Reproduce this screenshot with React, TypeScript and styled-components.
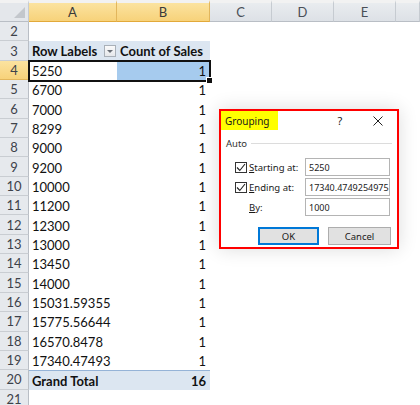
import React from "react";
import styled, { createGlobalStyle, css } from "styled-components";

const GlobalStyle = createGlobalStyle`
  html, body {
    margin: 0;
    padding: 0;
    background: #ffffff;
    overflow: hidden;
  }
  body {
    font-family: Lato, "Liberation Sans", sans-serif;
  }
`;

const ROWS: { label: string; count: string }[] = [
  { label: "6700", count: "1" },
  { label: "7000", count: "1" },
  { label: "8299", count: "1" },
  { label: "9000", count: "1" },
  { label: "9200", count: "1" },
  { label: "10000", count: "1" },
  { label: "11200", count: "1" },
  { label: "12300", count: "1" },
  { label: "13000", count: "1" },
  { label: "13450", count: "1" },
  { label: "14000", count: "1" },
  { label: "15031.59355", count: "1" },
  { label: "15775.56644", count: "1" },
  { label: "16570.8478", count: "1" },
  { label: "17340.47493", count: "1" },
];

const COLUMNS = ["A", "B", "C", "D", "E", ""];

const Page = styled.div`
  position: relative;
  width: 420px;
  height: 405px;
  overflow: hidden;
`;

const Sheet = styled.div`
  position: relative;
  display: grid;
  grid-template-columns: 29px 88px 93px 62px 62px 62px 1fr;
  grid-template-rows: 22px repeat(20, 19.35px);
`;

const Corner = styled.div`
  position: relative;
  background: #e4e7eb;
  border-top: 3px solid #f2f2f2;
  border-right: 1px solid #c6cbd1;
  border-bottom: 1px solid #b9bec5;
  box-sizing: border-box;
  &::after {
    content: "";
    position: absolute;
    right: 3px;
    bottom: 3px;
    width: 0;
    height: 0;
    border-left: 11px solid transparent;
    border-bottom: 11px solid #c3c7cc;
  }
`;

const ColHeader = styled.div<{ $selected?: boolean }>`
  display: flex;
  align-items: center;
  justify-content: center;
  box-sizing: border-box;
  border-top: 3px solid #f2f2f2;
  border-right: 1px solid #c6cbd1;
  border-bottom: 1px solid #b9bec5;
  font-size: 13px;
  color: #4a4f57;
  background: linear-gradient(#e9ecef, #dde1e6);
  ${(p) =>
    p.$selected &&
    css`
      background: linear-gradient(#fbe3a0, #f7d27a);
      border-right-color: #e2b65c;
      border-bottom-color: #e2a93a;
      color: #3a3a3a;
    `}
`;

const RowHeader = styled.div<{ $selected?: boolean }>`
  display: flex;
  align-items: center;
  justify-content: center;
  box-sizing: border-box;
  border-right: 1px solid #b9bec5;
  border-bottom: 1px solid #c9cdd2;
  background: #e6e9ed;
  font-size: 13px;
  color: #3d424a;
  ${(p) =>
    p.$selected &&
    css`
      background: linear-gradient(#fbe3a0, #f7d27a);
      border-right-color: #e2a93a;
      border-bottom-color: #e2b65c;
    `}
`;

type CellKind = "plain" | "head" | "total" | "highlight";

const Cell = styled.div<{ $kind?: CellKind; $right?: boolean }>`
  display: flex;
  align-items: center;
  justify-content: ${(p) => (p.$right ? "flex-end" : "flex-start")};
  box-sizing: border-box;
  padding: 1px 4px 0 3px;
  font-size: 13px;
  color: #111;
  white-space: nowrap;
  overflow: hidden;
  background: #ffffff;
  ${(p) =>
    p.$kind === "head" &&
    css`
      background: #dce6f1;
      font-weight: 700;
      border-bottom: 1px solid #c5d5e8;
    `}
  ${(p) =>
    p.$kind === "total" &&
    css`
      background: #dce6f1;
      font-weight: 700;
      border-top: 1px solid #95b3d7;
    `}
  ${(p) =>
    p.$kind === "highlight" &&
    css`
      background: #a6cbee;
    `}
`;

const HeadCell = styled(Cell)`
  justify-content: space-between;
  padding-right: 1px;
`;

const FilterButton = styled.span`
  display: inline-flex;
  align-items: center;
  justify-content: center;
  width: 12px;
  height: 12px;
  box-sizing: border-box;
  border: 1px solid #a9b0b8;
  background: linear-gradient(#fafafa, #e6e8eb);
  &::after {
    content: "";
    width: 0;
    height: 0;
    border-left: 3px solid transparent;
    border-right: 3px solid transparent;
    border-top: 3px solid #6a6f77;
    margin-top: 1px;
  }
`;

const Selection = styled.div`
  position: absolute;
  grid-row: 4 / 5;
  grid-column: 2 / 4;
  inset: -1px -1px -2px -1px;
  border: 2px solid #111;
  pointer-events: none;
  &::after {
    content: "";
    position: absolute;
    right: -4px;
    bottom: -4px;
    width: 5px;
    height: 5px;
    background: #111;
    border: 1px solid #fff;
  }
`;

/* dialog */

const Dialog = styled.div`
  position: absolute;
  left: 219px;
  top: 109px;
  width: 180px;
  height: 140px;
  box-sizing: border-box;
  border: 2px solid #ff0000;
  background: #ffffff;
  box-shadow: 0 0 18px rgba(0, 0, 0, 0.14);
  font-family: "Noto Sans", "Open Sans", sans-serif;
  font-size: 9.5px;
  color: #1a1a1a;
  display: flex;
  flex-direction: column;
`;

const TitleBar = styled.div`
  display: flex;
  align-items: center;
  height: 19px;
`;

const TitleText = styled.div`
  background: #ffff00;
  height: 100%;
  width: 57px;
  display: flex;
  align-items: center;
  padding-left: 4px;
  box-sizing: border-box;
  font-size: 10px;
`;

const TitleSpacer = styled.div`
  flex: 1;
`;

const TitleButton = styled.div`
  width: 30px;
  display: flex;
  align-items: center;
  justify-content: center;
  height: 100%;
  color: #222;
  font-size: 11px;
  &:last-child {
    margin-right: 4px;
    margin-left: 8px;
  }
`;

const Body = styled.div`
  display: flex;
  flex-direction: column;
  padding: 7px 5px 0 5px;
`;

const GroupLabel = styled.div`
  display: flex;
  align-items: center;
  gap: 4px;
  color: #333;
  height: 12px;
  &::after {
    content: "";
    flex: 1;
    height: 1px;
    background: #dcdcdc;
  }
`;

const Fields = styled.div`
  display: flex;
  flex-direction: column;
  gap: 2px;
  margin-top: 9px;
`;

const FieldRow = styled.div`
  display: grid;
  grid-template-columns: 14px 56px 85px;
  align-items: center;
  padding-left: 9px;
  height: 18px;
`;

const CheckBox = styled.span`
  width: 12px;
  height: 11px;
  box-sizing: border-box;
  border: 1px solid #333;
  display: inline-flex;
  align-items: center;
  justify-content: center;
  background: #fff;
`;

const FieldLabel = styled.span`
  white-space: nowrap;
  & u {
    text-decoration: underline;
  }
`;

const Input = styled.div`
  height: 18px;
  box-sizing: border-box;
  border: 1px solid #b4b4b4;
  background: #fff;
  display: flex;
  align-items: center;
  padding-left: 3px;
  font-size: 9px;
  white-space: nowrap;
  overflow: hidden;
`;

const Buttons = styled.div`
  display: flex;
  justify-content: flex-end;
  gap: 9px;
  margin-top: 11px;
  padding-right: 1px;
`;

const Button = styled.div<{ $primary?: boolean }>`
  width: ${(p) => (p.$primary ? 61 : 63)}px;
  height: 18px;
  box-sizing: border-box;
  display: flex;
  align-items: center;
  justify-content: center;
  background: #e1e1e1;
  border: 1px solid ${(p) => (p.$primary ? "#0078d7" : "#adadad")};
  ${(p) => p.$primary && "box-shadow: inset 0 0 0 1px #0078d7;"}
  color: #1a1a1a;
`;

const CheckMark = () => (
  <svg width="10" height="9" viewBox="0 0 10 9">
    <path d="M1 4.5 L3.8 7.5 L9 1" fill="none" stroke="#222" strokeWidth="1.1" />
  </svg>
);

const CloseIcon = () => (
  <svg width="10" height="10" viewBox="0 0 10 10">
    <path d="M0.5 0.5 L9.5 9.5 M9.5 0.5 L0.5 9.5" stroke="#222" strokeWidth="1" />
  </svg>
);

function HeaderRow() {
  return (
    <>
      <Corner />
      {COLUMNS.map((c, i) => (
        <ColHeader key={i} $selected={c === "A" || c === "B"}>
          {c}
        </ColHeader>
      ))}
    </>
  );
}

function Blanks({ from }: { from: number }) {
  return (
    <>
      {COLUMNS.slice(from).map((_, i) => (
        <Cell key={i} />
      ))}
    </>
  );
}

export default function App() {
  return (
    <Page>
      <GlobalStyle />
      <Sheet>
        <HeaderRow />

        <RowHeader>2</RowHeader>
        <Blanks from={0} />

        <RowHeader>3</RowHeader>
        <HeadCell $kind="head">
          Row Labels
          <FilterButton />
        </HeadCell>
        <Cell $kind="head">Count of Sales</Cell>
        <Blanks from={2} />

        <RowHeader $selected>4</RowHeader>
        <Cell>5250</Cell>
        <Cell $kind="highlight" $right>
          1
        </Cell>
        <Blanks from={2} />

        {ROWS.map((r, i) => (
          <React.Fragment key={r.label}>
            <RowHeader>{i + 5}</RowHeader>
            <Cell>{r.label}</Cell>
            <Cell $right>{r.count}</Cell>
            <Blanks from={2} />
          </React.Fragment>
        ))}

        <RowHeader>20</RowHeader>
        <Cell $kind="total">Grand Total</Cell>
        <Cell $kind="total" $right>
          16
        </Cell>
        <Blanks from={2} />

        <RowHeader>21</RowHeader>
        <Blanks from={0} />

        <Selection />
      </Sheet>

      <Dialog>
        <TitleBar>
          <TitleText>Grouping</TitleText>
          <TitleSpacer />
          <TitleButton>?</TitleButton>
          <TitleButton>
            <CloseIcon />
          </TitleButton>
        </TitleBar>
        <Body>
          <GroupLabel>Auto</GroupLabel>
          <Fields>
            <FieldRow>
              <CheckBox>
                <CheckMark />
              </CheckBox>
              <FieldLabel>
                <u>S</u>tarting at:
              </FieldLabel>
              <Input>5250</Input>
            </FieldRow>
            <FieldRow>
              <CheckBox>
                <CheckMark />
              </CheckBox>
              <FieldLabel>
                <u>E</u>nding at:
              </FieldLabel>
              <Input>17340.4749254975</Input>
            </FieldRow>
            <FieldRow>
              <span />
              <FieldLabel>
                <u>B</u>y:
              </FieldLabel>
              <Input>1000</Input>
            </FieldRow>
          </Fields>
          <Buttons>
            <Button $primary>OK</Button>
            <Button>Cancel</Button>
          </Buttons>
        </Body>
      </Dialog>
    </Page>
  );
}
